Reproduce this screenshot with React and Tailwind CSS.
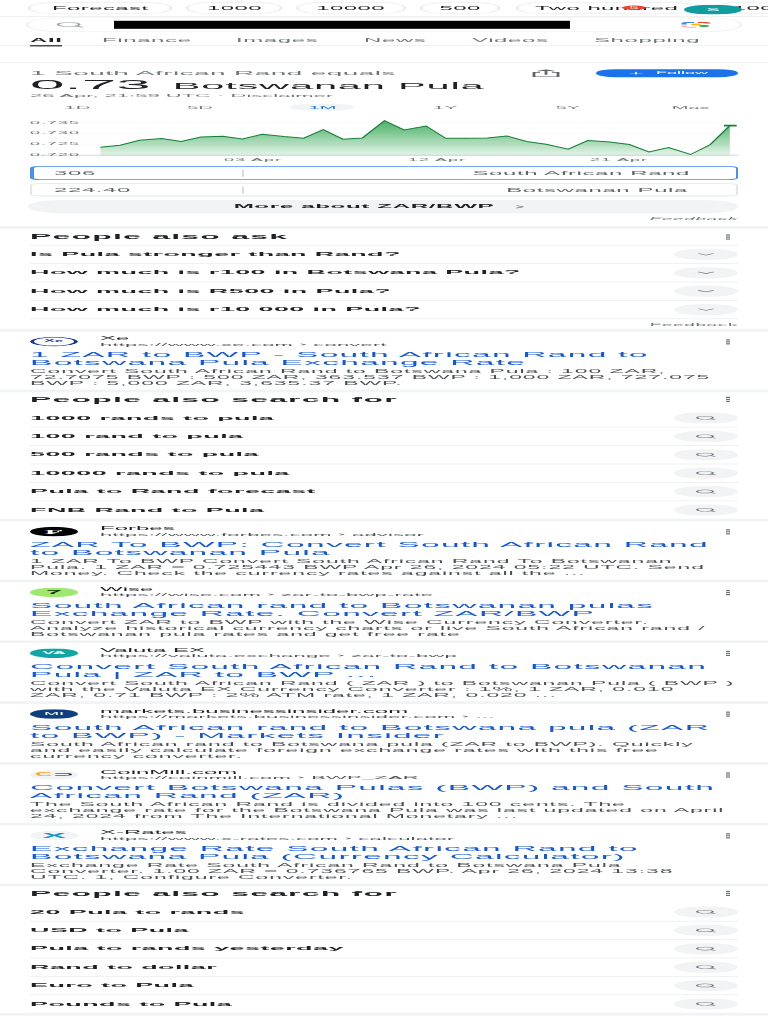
import React from "react";
import { ChevronDown, Search, Plus, ChevronRight } from "lucide-react";

const titleCls = "font-bold text-[16px] tracking-[0.6px] text-[#202124]";

const Dots = () => (
  <div className="flex flex-col gap-[2px] items-center w-[4px] mr-[3px]">
    <span className="w-[2px] h-[3px] bg-[#70757a]" />
    <span className="w-[2px] h-[3px] bg-[#70757a]" />
    <span className="w-[2px] h-[3px] bg-[#70757a]" />
  </div>
);

const Gap = () => <div className="h-[7px] bg-[#f1f3f4]" />;

const Row = ({ text, icon }) => (
  <div className="h-[46px] flex items-center justify-between border-b-2 border-[#eeeeee]">
    <span className="font-bold text-[13.5px] tracking-[0.2px] text-[#202124]">{text}</span>
    <span className="w-[32px] h-[28px] rounded-full bg-[#f1f3f4] flex items-center justify-center text-[#70757a]">
      {icon === "chev" ? <ChevronDown size={14} /> : <Search size={12} />}
    </span>
  </div>
);

const SearchFor = ({ items }) => (
  <section className="px-[15px] h-[316px]">
    <div className="h-[35px] mb-[7px] flex items-center justify-between">
      <h2 className={titleCls}>People also search for</h2>
      <Dots />
    </div>
    {items.map((t) => (
      <Row key={t} text={t} />
    ))}
  </section>
);

const Result = ({ logo, name, url, title, desc }) => (
  <article className="px-[15px] pt-[12px] h-[145px]">
    <div className="flex items-center h-[26px]">
      <div className="w-[24px] h-[24px] rounded-full flex items-center justify-center overflow-hidden shrink-0">{logo}</div>
      <div className="ml-[11px] flex-1">
        <div className="text-[12px] leading-[13px] text-[#202124]">{name}</div>
        <div className="text-[11px] leading-[13px] tracking-[0.1px] text-[#4d5156]">{url}</div>
      </div>
      <Dots />
    </div>
    <h3 className="mt-[11px] text-[16.8px] leading-[20px] tracking-[0.62px] text-[#1558d6]">{title}</h3>
    <p className="mt-[4px] text-[11.5px] leading-[15px] tracking-[0.45px] whitespace-pre text-[#4d5156]">{desc}</p>
  </article>
);

const chartPts =
  "205,112 245,106 285,91 330,86 370,95 410,81 455,79 495,87 535,73 580,80 620,85 660,59 700,88 740,84 785,32 825,60 870,48 910,85 950,85 995,84 1035,78 1075,95 1115,103 1160,118 1200,92 1245,96 1285,104 1325,126 1365,113 1410,134 1450,104 1490,47";

const App = () => {
  return (
    <div className="w-[768px] h-[1024px] overflow-hidden bg-white blur-[0.6px]">
      <div className="w-[384px] h-[2560px] origin-top-left scale-x-[2] scale-y-[0.4] font-['Liberation_Sans',sans-serif] relative">
        {/* chips */}
        <div className="h-[42px] pl-[14px] flex items-center gap-[7.2px] overflow-hidden border-b-2 border-[#eeeeee]">
          {["Forecast", "1000", "10000", "500", "Two hundred", "100"].map((c) => (
            <span key={c} className="shrink-0 h-[30px] px-[9px] first:px-[11px] rounded-full border border-[#e4e6e9] flex items-center text-[12px] tracking-[0.2px] font-medium text-[#202124]">
              {c}
            </span>
          ))}
        </div>
        <span className="absolute left-[311px] top-[14px] w-[12px] h-[11px] rounded-full bg-[#ea4335] text-white text-[8px] flex items-center justify-center">5</span>
        <span className="absolute left-[342px] top-[12px] w-[29px] h-[24px] rounded-full bg-[#0f9d9f] text-white text-[10px] flex items-center justify-center">S</span>

        {/* search box */}
        <div className="h-[40px] px-[13px] flex items-center">
          <div className="w-full h-[36px] rounded-full border border-[#eeeeee] flex items-center pl-[13px] pr-[14px]">
            <Search size={16} className="text-[#9aa0a6]" />
            <div className="ml-[14px] w-[228px] h-[20px] bg-black" />
            <svg viewBox="0 0 16 16" className="ml-auto w-[16px] h-[16px]">
              <path d="M2 7V4a2 2 0 0 1 2-2h3" fill="none" stroke="#4285f4" strokeWidth="2.5" />
              <path d="M9 2h3a2 2 0 0 1 2 2v1" fill="none" stroke="#ea4335" strokeWidth="2.5" />
              <path d="M2 10v2a2 2 0 0 0 2 2h4" fill="none" stroke="#f4b4b4" strokeWidth="2.5" />
              <circle cx="12" cy="11" r="2.5" fill="#34a853" />
              <circle cx="8" cy="7" r="2.5" fill="#fbbc04" />
            </svg>
          </div>
        </div>

        {/* tabs */}
        <div className="h-[33px] px-[15px] flex items-start pt-[10px] border-b-2 border-[#eeeeee] text-[12px] text-[#70757a] tracking-[0.3px] relative">
          <span className="absolute left-[15px] font-bold text-[#202124] border-b-[3px] border-[#202124] pb-[3px]">All</span>
          <span className="absolute left-[51px]">Finance</span>
          <span className="absolute left-[118px]">Images</span>
          <span className="absolute left-[182px]">News</span>
          <span className="absolute left-[236px]">Videos</span>
          <span className="absolute left-[297px]">Shopping</span>
        </div>
        <div className="h-[42px] border-b-2 border-[#eeeeee]" />

        {/* currency card */}
        <section className="h-[408px] px-[15px] pt-[16px]">
          <div className="h-[20px] flex items-center justify-between">
            <span className="text-[14px] tracking-[0.2px] text-[#70757a]">1 South African Rand equals</span>
            <div className="flex items-center gap-[18px]">
              <svg viewBox="0 0 14 20" className="w-[14px] h-[20px] text-[#5f6368]" fill="none" stroke="currentColor" strokeWidth="1.4">
                <path d="M4 8H1v11h12V8h-3" />
                <path d="M7 14V1M3 5l4-4 4 4" />
              </svg>
              <span className="w-[71px] h-[20px] rounded-full bg-[#1a73e8] flex items-center justify-center gap-[5px] text-white text-[9px]">
                <Plus size={10} /> Follow
              </span>
            </div>
          </div>
          <div className="mt-[3px] h-[34px] flex items-baseline text-[#202124]">
            <span className="text-[31px] leading-[34px]">0.73</span>
            <span className="ml-[11px] text-[20.8px] tracking-[0.4px]">Botswanan Pula</span>
          </div>
          <div className="mt-[1px] h-[14px] text-[11px] leading-[14px] text-[#70757a]">26 Apr, 21:59 UTC · Disclaimer</div>
          <div className="mt-[15px] h-[16px] -mx-[7px] grid grid-cols-6 items-center justify-items-center text-[10px] text-[#70757a]">
            <span>1D</span>
            <span>5D</span>
            <span className="px-[9px] h-[16px] flex items-center rounded-full bg-[#f1f3f4] text-[#1a73e8]">1M</span>
            <span>1Y</span>
            <span>5Y</span>
            <span>Max</span>
          </div>
          {/* chart */}
          <div className="relative h-[118px] -mx-[15px] -mt-[1px]">
            <svg viewBox="0 0 1568 142" preserveAspectRatio="none" className="w-full h-full">
              <defs>
                <linearGradient id="g" x1="0" y1="0" x2="0" y2="1">
                  <stop offset="0" stopColor="#34a853" stopOpacity="0.9" />
                  <stop offset="1" stopColor="#34a853" stopOpacity="0.12" />
                </linearGradient>
              </defs>
              <g stroke="#eeeeee" strokeWidth="1">
                <line x1="60" x2="1508" y1="36" y2="36" />
                <line x1="60" x2="1508" y1="70" y2="70" />
                <line x1="60" x2="1508" y1="103" y2="103" />
              </g>
              <line x1="60" x2="1508" y1="136" y2="136" stroke="#bdc1c6" strokeWidth="1.5" />
              <polygon points={`205,138 ${chartPts} 1490,138`} fill="url(#g)" />
              <polyline points={chartPts} fill="none" stroke="#188038" strokeWidth="3" />
              <line x1="1478" x2="1504" y1="47" y2="47" stroke="#188038" strokeWidth="5" />
            </svg>
            <span className="absolute left-[15px] top-[25px] text-[9px] tracking-[0.5px] text-[#70757a]">0.735</span>
            <span className="absolute left-[15px] top-[52px] text-[9px] tracking-[0.5px] text-[#70757a]">0.730</span>
            <span className="absolute left-[15px] top-[79px] text-[9px] tracking-[0.5px] text-[#70757a]">0.725</span>
            <span className="absolute left-[15px] top-[107px] text-[9px] tracking-[0.5px] text-[#70757a]">0.720</span>
            <span className="absolute left-[112px] top-[119px] text-[9px] tracking-[0.5px] text-[#70757a]">03 Apr</span>
            <span className="absolute left-[204px] top-[119px] text-[9px] tracking-[0.5px] text-[#70757a]">12 Apr</span>
            <span className="absolute left-[295px] top-[119px] text-[9px] tracking-[0.5px] text-[#70757a]">21 Apr</span>
          </div>
          <div className="mt-[22px] h-[35px] rounded-[5px] border-y-[2.5px] border-l-2 border-r border-[#4a90ee] flex items-center text-[12px] tracking-[0.3px] text-[#5f6368]">
            <span className="w-[105px] pl-[10px] border-r border-[#dadce0]">306</span>
            <span className="flex-1 text-right pr-[23px]">South African Rand</span>
          </div>
          <div className="mt-[8px] h-[33px] rounded-[5px] border-x border-y-2 border-[#e4e6e9] flex items-center text-[12px] tracking-[0.3px] text-[#5f6368]">
            <span className="w-[106px] pl-[11px] border-r border-[#dadce0]">224.40</span>
            <span className="flex-1 text-right pr-[24px]">Botswanan Pula</span>
          </div>
          <div className="mt-[9px] h-[33px] rounded-full bg-[#f1f3f4] flex items-center justify-center gap-[7px] font-bold text-[12.1px] tracking-[0.3px] text-[#202124] -ml-[1px]">
            More about ZAR/BWP
            <ChevronRight size={12} className="text-[#5f6368]" />
          </div>
          <div className="mt-[8px] text-right text-[9.5px] italic tracking-[0.3px] text-[#70757a]">Feedback</div>
        </section>
        <Gap />

        {/* people also ask */}
        <section className="h-[250px] px-[15px]">
          <div className="h-[42px] flex items-center justify-between border-b-2 border-[#eeeeee]">
            <h2 className={titleCls}>People also ask</h2>
            <Dots />
          </div>
          {["Is Pula stronger than Rand?", "How much is r100 in Botswana Pula?", "How much is R500 in Pula?", "How much is r10 000 in Pula?"].map((q) => (
            <Row key={q} text={q} icon="chev" />
          ))}
          <div className="mt-[6px] text-right text-[9.5px] tracking-[0.3px] text-[#70757a]">Feedback</div>
        </section>
        <Gap />

        <Result
          logo={<div className="w-full h-full rounded-full border-2 border-[#1a3a8f] flex items-center justify-center text-[8px] font-bold text-[#1a3a8f]">Xe</div>}
          name="Xe"
          url="https://www.xe.com › convert"
          title="1 ZAR to BWP - South African Rand to Botswana Pula Exchange Rate"
          desc={"Convert South African Rand to Botswana Pula : 100 ZAR,\n72.7075 BWP : 500 ZAR, 363.537 BWP : 1,000 ZAR, 727.075\nBWP : 5,000 ZAR, 3,635.37 BWP."}
        />
        <Gap />
        <SearchFor items={["1000 rands to pula", "100 rand to pula", "500 rands to pula", "10000 rands to pula", "Pula to Rand forecast", "FNB Rand to Pula"]} />
        <Gap />

        <Result
          logo={<div className="w-full h-full bg-black text-white font-bold text-[15px] flex items-center justify-center font-['Liberation_Serif',serif]">F</div>}
          name="Forbes"
          url="https://www.forbes.com › advisor"
          title="ZAR To BWP: Convert South African Rand to Botswanan Pula"
          desc={"1 ZAR To BWP Convert South African Rand To Botswanan\nPula. 1 ZAR = 0.725443 BWP Apr 26, 2024 05:22 UTC. Send\nMoney. Check the currency rates against all the ..."}
        />
        <Gap />
        <Result
          logo={<div className="w-full h-full bg-[#9fe870] text-[#163300] font-bold text-[14px] flex items-center justify-center">7</div>}
          name="Wise"
          url="https://wise.com › zar-to-bwp-rate"
          title="South African rand to Botswanan pulas Exchange Rate. Convert ZAR/BWP"
          desc={"Convert ZAR to BWP with the Wise Currency Converter.\nAnalyze historical currency charts or live South African rand /\nBotswanan pula rates and get free rate"}
        />
        <Gap />
        <Result
          logo={<div className="w-full h-full bg-[#12a5a5] text-white font-bold text-[9px] flex items-center justify-center">VA</div>}
          name="Valuta EX"
          url="https://valuta.exchange › zar-to-bwp"
          title="Convert South African Rand to Botswanan Pula | ZAR to BWP ..."
          desc={"Convert South African Rand ( ZAR ) to Botswanan Pula ( BWP )\nwith the Valuta EX Currency Converter : 1%, 1 ZAR, 0.010\nZAR, 0.71 BWP : 2% ATM rate, 1 ZAR, 0.020 ..."}
        />
        <Gap />
        <Result
          logo={<div className="w-full h-full bg-[#0f3f7f] text-white text-[9px] flex items-center justify-center">MI</div>}
          name="markets.businessinsider.com"
          url="https://markets.businessinsider.com › ..."
          title="South African rand to Botswana pula (ZAR to BWP) - Markets Insider"
          desc={"South African rand to Botswana pula (ZAR to BWP). Quickly\nand easily calculate foreign exchange rates with this free\ncurrency converter."}
        />
        <Gap />
        <Result
          logo={<div className="w-full h-full bg-[#f1f3f4] flex items-center justify-center text-[12px] font-bold text-[#f9a825]">C<span className="text-[#202124]">⊃</span></div>}
          name="CoinMill.com"
          url="https://coinmill.com › BWP_ZAR"
          title="Convert Botswana Pulas (BWP) and South African Rand (ZAR)"
          desc={"The South African Rand is divided into 100 cents. The\nexchange rate for the Botswana Pula was last updated on April\n24, 2024 from The International Monetary ..."}
        />
        <Gap />
        <Result
          logo={<div className="w-full h-full bg-[#f1f3f4] flex items-center justify-center text-[18px] font-bold text-[#1296c8]">X</div>}
          name="X-Rates"
          url="https://www.x-rates.com › calculator"
          title="Exchange Rate South African Rand to Botswana Pula (Currency Calculator)"
          desc={"Exchange Rate South African Rand to Botswana Pula\nConverter. 1.00 ZAR = 0.736765 BWP. Apr 26, 2024 13:38\nUTC. 1, Configure Converter."}
        />
        <Gap />
        <SearchFor items={["20 Pula to rands", "USD to Pula", "Pula to rands yesterday", "Rand to dollar", "Euro to Pula", "Pounds to Pula"]} />
        <Gap />
      </div>
    </div>
  );
};

export default App;
